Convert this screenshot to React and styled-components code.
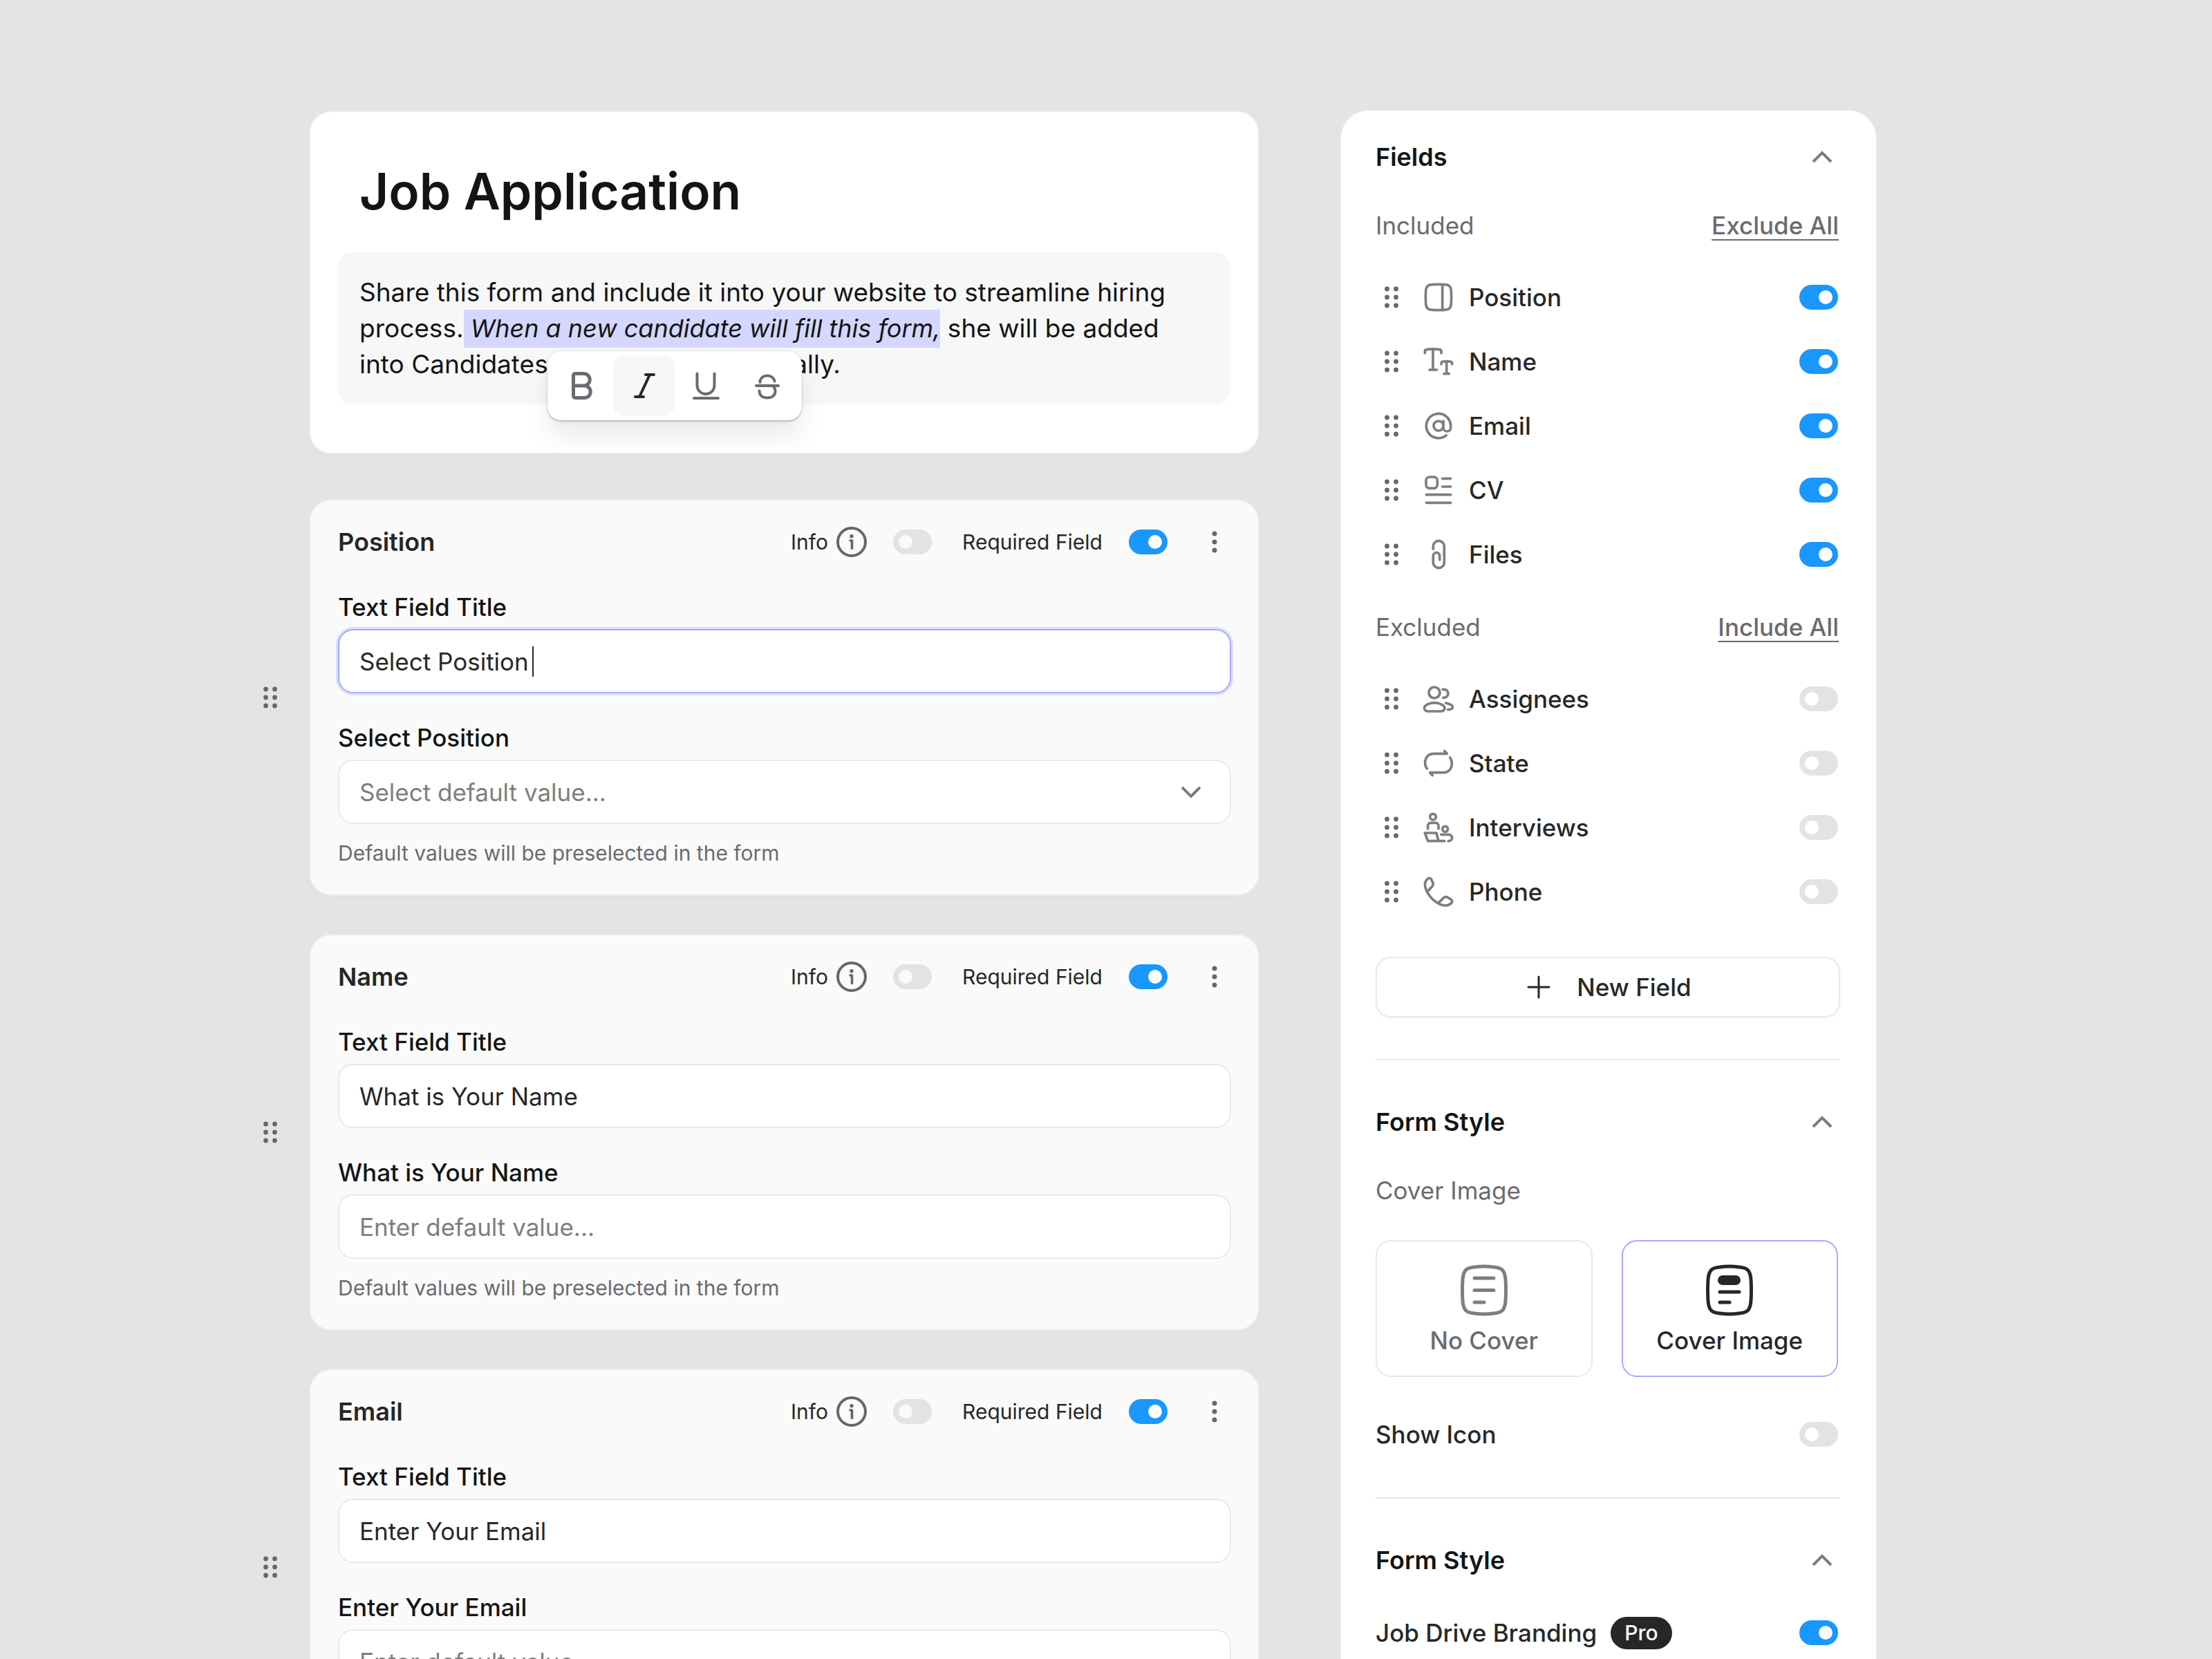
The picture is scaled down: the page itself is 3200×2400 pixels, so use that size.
import React, { useId } from 'react';
import styled, { createGlobalStyle, css } from 'styled-components';

const color = {
  page: '#e4e4e4',
  ring: '#ebebeb',
  line: '#e9e9ed',
  heading: '#121516',
  text: '#262728',
  muted: '#6a6a70',
  icon: '#7b7f7e',
  grip: '#66676b',
  blue: '#1997fd',
  off: '#e3e3e6',
  focus: '#a5abff',
  focusSoft: '#dcdeff',
  selection: '#d5d7ff',
};

const GlobalStyle = createGlobalStyle`
  *, *::before, *::after { box-sizing: border-box; }
  body { margin: 0; background: ${color.page}; }
  body, button, input, select {
    font-family: Inter, 'Liberation Sans', sans-serif;
    font-size: 35px;
    line-height: 44px;
    color: ${color.text};
  }
  h1, h2, h3, p, ul { margin: 0; padding: 0; }
`;

/* ---------- layout ---------- */

const Page = styled.div`
  display: grid;
  grid-template-columns: minmax(0, 1fr) 774px;
  column-gap: 118px;
  height: 100vh;
  padding: 160px 486px 0 379px;
  overflow: hidden;
  background: ${color.page};
`;

const Builder = styled.main`
  display: flex;
  flex-direction: column;
  gap: 55px;
`;

const IntroCard = styled.section`
  margin: 0 0 10px 68px;
  padding: 69px 40px 70px 39px;
  border: 2px solid ${color.ring};
  border-radius: 32px;
  background: #fff;
  box-shadow: 0 2px 10px rgba(0, 0, 0, 0.02);
`;

const Title = styled.h1`
  padding: 0 32px;
  font-size: 73px;
  line-height: 92px;
  font-weight: 600;
  color: ${color.heading};
`;

const Editor = styled.div`
  position: relative;
  margin-top: 42px;
  padding: 32px;
  border-radius: 22px;
  background: #f7f7f7;
`;

const Description = styled.p`
  font-size: 37px;
  line-height: 52px;
  color: ${color.heading};
`;

const Selected = styled.em`
  padding: 5px 0 6px;
  background: ${color.selection};
  font-size: 36px;
`;

const Toolbar = styled.div`
  position: absolute;
  top: 143px;
  left: 304px;
  display: flex;
  padding: 6px;
  border-radius: 20px;
  background: #fff;
  box-shadow: 0 0 2px rgba(20, 20, 40, 0.2), 0 2px 3px rgba(20, 20, 40, 0.22),
    0 24px 36px rgba(0, 0, 0, 0.08);
`;

const ToolButton = styled.button`
  display: grid;
  place-items: center;
  width: 89px;
  height: 88px;
  padding: 0;
  border: 0;
  border-radius: 16px;
  background: ${(p) => (p.$active ? '#f7f7f7' : 'transparent')};
  color: ${(p) => (p.$active ? color.text : '#6b6b71')};
`;

/* ---------- shared controls ---------- */

const Switch = styled.input.attrs({ type: 'checkbox' })`
  appearance: none;
  display: flex;
  align-items: center;
  justify-content: flex-start;
  flex: none;
  width: 56px;
  height: 36px;
  margin: 0;
  padding: 0 8px;
  border-radius: 18px;
  background: ${color.off};

  &::before {
    content: '';
    width: 20px;
    height: 20px;
    border-radius: 50%;
    background: ${(p) => p.$knob || '#fff'};
  }

  &:checked {
    justify-content: flex-end;
    background: ${color.blue};
  }

  &:checked::before {
    background: #fff;
  }
`;

const BareButton = styled.button`
  display: grid;
  place-items: center;
  flex: none;
  padding: 0;
  border: 0;
  background: none;
`;

const MenuButton = styled(BareButton)`
  width: 48px;
  height: 44px;
`;

/* ---------- field cards ---------- */

const FieldRow = styled.div`
  display: flex;
  align-items: center;
  gap: 44px;
`;

const HandleSlot = styled.div`
  display: flex;
  justify-content: center;
  width: 24px;
`;

const FieldCard = styled.section`
  flex: 1;
  padding: 38px 39px 40px 40px;
  border: 2px solid ${color.ring};
  border-radius: 32px;
  background: #fafafa;
  box-shadow: 0 2px 10px rgba(0, 0, 0, 0.02);
`;

const FieldHead = styled.header`
  display: flex;
  align-items: center;
  height: 44px;
  margin-bottom: 50px;
`;

const FieldName = styled.h2`
  flex: 1;
  font-size: 36px;
  line-height: 44px;
  font-weight: 600;
`;

const Option = styled.label`
  display: flex;
  align-items: center;
  gap: 38px;
  margin-right: 44px;
  font-size: 30px;
  line-height: 40px;
`;

const OptionText = styled.span`
  display: flex;
  align-items: center;
  gap: 12px;
`;

const FieldLabel = styled.label`
  display: block;
  margin-bottom: 10px;
  font-weight: 500;
  color: ${color.heading};
`;

const Control = styled.div`
  display: flex;
  align-items: center;
  height: 93px;
  padding: 0 40px 0 29px;
  border: 2px solid ${color.line};
  border-radius: 22px;
  background: #fff;

  & + ${FieldLabel} {
    margin-top: 42px;
  }

  ${(p) =>
    p.$focused &&
    css`
      border-color: ${color.focus};
      box-shadow: 0 0 0 3px ${color.focusSoft};
    `}
`;

const entry = css`
  padding: 0;
  border: 0;
  outline: 0;
  background: none;
`;

const TextInput = styled.input`
  ${entry}
  ${(p) => (p.$hug ? 'field-sizing: content;' : 'flex: 1;')}

  &::placeholder {
    color: ${color.icon};
    opacity: 1;
  }
`;

const Select = styled.select`
  ${entry}
  flex: 1;
  appearance: none;
  color: ${color.icon};
`;

const Caret = styled.span`
  width: 2px;
  height: 44px;
  margin-left: 5px;
  background: ${color.text};
`;

const Hint = styled.p`
  margin-top: 22px;
  font-size: 30px;
  line-height: 40px;
  color: ${color.muted};
`;

/* ---------- settings panel ---------- */

const Panel = styled.aside`
  padding: 45px 52px 0 50px;
  border-radius: 40px 40px 0 0;
  background: #fff;
  box-shadow: 0 0 0 1px #ececec;
`;

const Group = styled.section`
  & + & {
    margin-top: 60px;
    padding-top: 67px;
    border-top: 2px solid ${color.line};
  }
`;

const GroupHead = styled.header`
  display: flex;
  align-items: center;
  justify-content: space-between;
  height: 44px;
  padding-right: 2px;
`;

const GroupTitle = styled.h2`
  font-size: 36px;
  line-height: 44px;
  font-weight: 600;
  color: ${color.heading};
`;

const SubHead = styled.div`
  display: flex;
  justify-content: space-between;
  margin: ${(p) => p.$top}px 0 35px;
  padding-right: 2px;
  color: ${color.muted};
`;

const SubTitle = styled.h3`
  font-size: 35px;
  line-height: 44px;
  font-weight: 400;
`;

const LinkButton = styled.button`
  padding: 0;
  border: 0;
  background: none;
  font-weight: 500;
  color: ${color.muted};
  text-decoration: underline;
  text-decoration-thickness: 2px;
  text-decoration-skip-ink: none;
  text-underline-offset: 7px;
`;

const ItemList = styled.ul`
  list-style: none;
`;

const Item = styled.li`
  display: flex;
  align-items: center;
  height: 93px;
  padding: 0 3px 0 13px;
`;

const ItemLabel = styled.label`
  display: flex;
  flex: 1;
  align-items: center;
  gap: 22px;
  margin-left: 36px;
  font-weight: 500;

  svg {
    color: ${color.icon};
  }
`;

const NewFieldButton = styled.button`
  display: flex;
  align-items: center;
  justify-content: center;
  gap: 38px;
  width: 100%;
  height: 88px;
  margin-top: 48px;
  padding: 0 0 0 4px;
  border: 2px solid ${color.line};
  border-radius: 22px;
  background: #fff;
  box-shadow: 0 2px 4px rgba(0, 0, 0, 0.04);
  font-weight: 500;
`;

const CoverChoices = styled.div`
  display: grid;
  grid-template-columns: 1fr 1fr;
  gap: 42px;
  margin-top: 50px;
  padding-right: 3px;
`;

const CoverRadio = styled.input.attrs({ type: 'radio' })`
  position: absolute;
  opacity: 0;
`;

const CoverChoice = styled.label`
  display: flex;
  flex-direction: column;
  align-items: center;
  gap: 13px;
  padding: 33px 0 29px;
  border: 2px solid ${color.line};
  border-radius: 22px;
  font-weight: 500;
  color: ${color.muted};

  svg {
    color: ${color.icon};
  }

  &:has(:checked) {
    border-color: ${color.focus};
    color: ${color.text};

    svg {
      color: ${color.text};
    }
  }
`;

const Setting = styled.div`
  display: flex;
  align-items: center;
  justify-content: space-between;
  height: 62px;
  margin-top: 52px;
  padding-right: 3px;
`;

const SettingLabel = styled.label`
  display: flex;
  align-items: center;
  gap: 20px;
  font-weight: 500;
`;

const Badge = styled.span`
  padding: 3px 20px 4px;
  border-radius: 24px;
  background: ${color.text};
  font-size: 30px;
  line-height: 40px;
  color: #fff;
`;

/* ---------- icons ---------- */

const Stroke = ({ size, box = size, height = size, boxHeight = box, width, children }) => (
  <svg
    width={size}
    height={height}
    viewBox={`0 0 ${box} ${boxHeight}`}
    fill="none"
    stroke="currentColor"
    strokeWidth={width}
    strokeLinecap="round"
    strokeLinejoin="round"
    aria-hidden="true"
  >
    {children}
  </svg>
);

const GripIcon = () => (
  <svg width="20" height="32" viewBox="0 0 20 32" fill={color.grip} aria-hidden="true">
    {[4, 16, 28].map((y) => (
      <React.Fragment key={y}>
        <circle cx="3.5" cy={y} r="3.4" />
        <circle cx="16.5" cy={y} r="3.4" />
      </React.Fragment>
    ))}
  </svg>
);

const MoreIcon = () => (
  <svg width="8" height="32" viewBox="0 0 8 32" fill={color.grip} aria-hidden="true">
    {[4, 16, 28].map((y) => (
      <circle key={y} cx="4" cy={y} r="3.5" />
    ))}
  </svg>
);

const InfoIcon = () => (
  <svg width="44" height="44" viewBox="0 0 44 44" fill="none" stroke="#66676b" aria-hidden="true">
    <circle cx="22" cy="22" r="20" strokeWidth="4" />
    <path d="M20 20H22.5V31.5" strokeWidth="3.6" strokeLinecap="round" strokeLinejoin="round" />
    <circle cx="22" cy="13.7" r="2.7" fill="#66676b" stroke="none" />
  </svg>
);

const ChevronIcon = ({ up }) => (
  <svg
    width="32"
    height="20"
    viewBox="0 0 32 20"
    fill="none"
    stroke="#7b7d7d"
    strokeWidth="4"
    aria-hidden="true"
  >
    <path d={up ? 'M3 17L16 4L29 17' : 'M3 3L16 16L29 3'} />
  </svg>
);

const tools = [
  {
    name: 'Bold',
    weight: 5,
    art: (
      <path d="M10.5 24H25.500a8.750 8.750 0 0 0 0-17.500H13a2.500 2.500 0 0 0-2.500 2.500V39a2.500 2.500 0 0 0 2.500 2.500H26.500a8.750 8.750 0 0 0 0-17.500H25" />
    ),
  },
  { name: 'Italic', active: true, weight: 4, art: <path d="M26 8H38M11 40H23M32 8L17 40" /> },
  {
    name: 'Underline',
    weight: 4,
    art: <path d="M11.5 6.5V23.5a12.5 12.5 0 0 0 25 0V6.5M7 42H42" />,
  },
  {
    name: 'Strikethrough',
    weight: 4,
    art: (
      <path d="M13.5 19V16.5a11 10 0 0 1 21 0V17.5M8 24H40M12.5 31.5C12.5 38 17 41.5 24 41.5C31 41.5 35.5 38 35.5 32C35.5 28 34 25 31 24" />
    ),
  },
];

const itemArt = {
  Position: (
    <path d="M40 11Q66 9 92 11C113 12 120 19 121 40Q123 66 121 92C120 113 113 120 92 121Q66 123 40 121C19 120 12 113 11 92Q9 66 11 40C12 19 19 12 40 11ZM83 11V121" />
  ),
  Name: (
    <path d="M7 29V22Q7 14 15 14Q42 9 70 14Q78 14 78 22V29M42 12V102M27 102H59M78 77Q78 67 84 67Q101 63 119 67Q125 67 125 77M101 66V119M90 119H112" />
  ),
  Email: (
    <>
      <circle cx="66" cy="66" r="21" />
      <path d="M87 45V74a16 16 0 0 0 32 0V66A53 53 0 1 0 100 107" />
    </>
  ),
  CV: (
    <>
      <rect x="12" y="9" width="49" height="49" rx="15" />
      <path d="M83 16H119M83 51H119M13 86H119M13 121H119" />
    </>
  ),
  Files: (
    <path d="M43 43V31a24 24 0 0 1 48 0V101a24 24 0 0 1-48 0V72a14 14 0 0 1 28 0V89" />
  ),
  Assignees: (
    <>
      <circle cx="48" cy="39" r="24" />
      <path d="M84 25H90a18 18 0 0 1 0 36H86M22 120H75C88 120 93 113 93 106C93 95 72 83 48 83C25 83 4 95 4 106C4 113 10 120 22 120ZM98 84C112 87 128 95 128 101C128 108 118 113 107 113" />
    </>
  ),
  State: (
    <path d="M16 90C0 68 7 25 46 25H103L92 13M116 42C132 64 125 107 86 107H29L40 119" />
  ),
  Interviews: (
    <>
      <circle cx="42" cy="20" r="13" />
      <path d="M20 72V58a12 12 0 0 1 12-12h22a12 12 0 0 1 12 12V72" />
      <circle cx="95" cy="73" r="12" />
      <path d="M77 97H111a14 14 0 0 1 0 28h-2M7 90H57L66 125H20ZM66 125H92" />
    </>
  ),
  Phone: (
    <path d="M20 63L39 43Q45 36 42 28L35 13Q29 2 19 10Q5 22 8 42Q13 72 42 100Q72 126 98 126Q112 125 121 116Q131 106 118 98L104 90Q96 86 89 92L68 112" />
  ),
};

const CoverIcon = ({ filled }) => (
  <Stroke size={68} height={75} boxHeight={75} width={5}>
    <path d="M20 4Q34 2 48 4C60 5 64 9 65 22Q66 37.5 65 53C64 66 60 70 48 71Q34 73 20 71C8 70 4 66 3 53Q2 37.5 3 22C4 9 8 5 20 4Z" />
    {filled ? (
      <>
        <rect x="17" y="16" width="33" height="14" rx="7" fill="currentColor" stroke="none" />
        <path d="M20 40H48M20 55H34" />
      </>
    ) : (
      <path d="M20 20H48M20 37.5H48M20 55H34" />
    )}
  </Stroke>
);

/* ---------- pieces ---------- */

function DragHandle({ label }) {
  return (
    <BareButton type="button" aria-label={`Reorder ${label}`}>
      <GripIcon />
    </BareButton>
  );
}

function FieldEditor({ name, title, kind = 'text', focused }) {
  const id = useId();
  return (
    <FieldRow>
      <HandleSlot>
        <DragHandle label={name} />
      </HandleSlot>
      <FieldCard>
        <FieldHead>
          <FieldName>{name}</FieldName>
          <Option>
            <OptionText>
              Info
              <InfoIcon />
            </OptionText>
            <Switch $knob="#fafafa" />
          </Option>
          <Option>
            Required Field
            <Switch defaultChecked />
          </Option>
          <MenuButton type="button" aria-label={`${name} options`}>
            <MoreIcon />
          </MenuButton>
        </FieldHead>
        <FieldLabel htmlFor={`${id}-title`}>Text Field Title</FieldLabel>
        <Control $focused={focused}>
          <TextInput id={`${id}-title`} defaultValue={title} $hug={focused} />
          {focused && <Caret />}
        </Control>
        <FieldLabel htmlFor={`${id}-value`}>{title}</FieldLabel>
        <Control>
          {kind === 'select' ? (
            <>
              <Select id={`${id}-value`}>
                <option>Select default value...</option>
              </Select>
              <ChevronIcon />
            </>
          ) : (
            <TextInput id={`${id}-value`} placeholder="Enter default value..." />
          )}
        </Control>
        <Hint>Default values will be preselected in the form</Hint>
      </FieldCard>
    </FieldRow>
  );
}

function FieldItem({ name, on }) {
  const id = useId();
  return (
    <Item>
      <DragHandle label={name} />
      <ItemLabel htmlFor={id}>
        <Stroke size={44} box={132} width={11}>
          {itemArt[name]}
        </Stroke>
        {name}
      </ItemLabel>
      <Switch id={id} defaultChecked={on} />
    </Item>
  );
}

function GroupHeader({ children }) {
  return (
    <GroupHead>
      <GroupTitle>{children}</GroupTitle>
      <MenuButton type="button" aria-label={`Collapse ${children}`}>
        <ChevronIcon up />
      </MenuButton>
    </GroupHead>
  );
}

export default function App() {
  return (
    <>
      <GlobalStyle />
      <Page>
        <Builder>
          <IntroCard>
            <Title>Job Application</Title>
            <Editor>
              <Description>
                Share this form and include it into your website to streamline hiring
                <br />
                process.
                <Selected> When a new candidate will fill this form,</Selected> she will be added
                <br />
                into Candidates database automatically.
              </Description>
              <Toolbar role="toolbar" aria-label="Text style">
                {tools.map((tool) => (
                  <ToolButton
                    key={tool.name}
                    type="button"
                    aria-label={tool.name}
                    aria-pressed={Boolean(tool.active)}
                    $active={tool.active}
                  >
                    <Stroke size={48} width={tool.weight}>
                      {tool.art}
                    </Stroke>
                  </ToolButton>
                ))}
              </Toolbar>
            </Editor>
          </IntroCard>
          <FieldEditor name="Position" title="Select Position" kind="select" focused />
          <FieldEditor name="Name" title="What is Your Name" />
          <FieldEditor name="Email" title="Enter Your Email" />
        </Builder>

        <Panel>
          <Group>
            <GroupHeader>Fields</GroupHeader>
            <SubHead $top={55}>
              <SubTitle>Included</SubTitle>
              <LinkButton type="button">Exclude All</LinkButton>
            </SubHead>
            <ItemList>
              {['Position', 'Name', 'Email', 'CV', 'Files'].map((name) => (
                <FieldItem key={name} name={name} on />
              ))}
            </ItemList>
            <SubHead $top={37}>
              <SubTitle>Excluded</SubTitle>
              <LinkButton type="button">Include All</LinkButton>
            </SubHead>
            <ItemList>
              {['Assignees', 'State', 'Interviews', 'Phone'].map((name) => (
                <FieldItem key={name} name={name} />
              ))}
            </ItemList>
            <NewFieldButton type="button">
              <Stroke size={34} width={3}>
                <path d="M17 2V32M2 17H32" />
              </Stroke>
              New Field
            </NewFieldButton>
          </Group>

          <Group>
            <GroupHeader>Form Style</GroupHeader>
            <SubHead $top={55}>
              <SubTitle>Cover Image</SubTitle>
            </SubHead>
            <CoverChoices>
              <CoverChoice>
                <CoverRadio name="cover" />
                <CoverIcon />
                No Cover
              </CoverChoice>
              <CoverChoice>
                <CoverRadio name="cover" defaultChecked />
                <CoverIcon filled />
                Cover Image
              </CoverChoice>
            </CoverChoices>
            <Setting>
              <SettingLabel htmlFor="show-icon">Show Icon</SettingLabel>
              <Switch id="show-icon" />
            </Setting>
          </Group>

          <Group>
            <GroupHeader>Form Style</GroupHeader>
            <Setting>
              <SettingLabel htmlFor="branding">
                Job Drive Branding
                <Badge>Pro</Badge>
              </SettingLabel>
              <Switch id="branding" defaultChecked />
            </Setting>
          </Group>
        </Panel>
      </Page>
    </>
  );
}
